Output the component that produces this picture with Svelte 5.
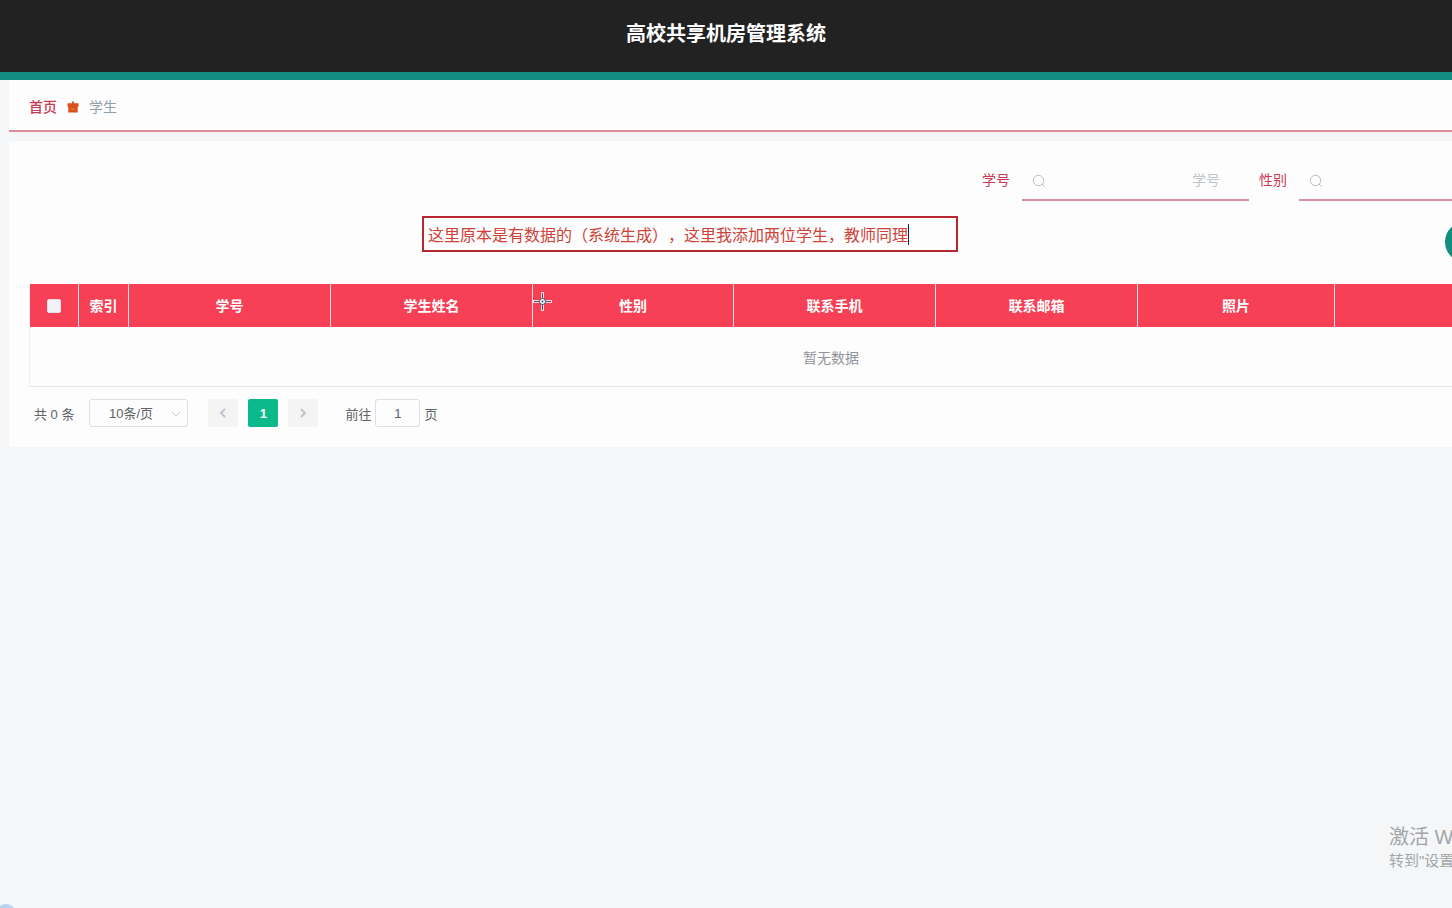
<script lang="ts">
  const columns = [
    { label: '学号', width: 202 },
    { label: '学生姓名', width: 202 },
    { label: '性别', width: 201 },
    { label: '联系手机', width: 202 },
    { label: '联系邮箱', width: 202 },
    { label: '照片', width: 197 }
  ];

  let studentNo = $state('');
  let gender = $state('');
  let allChecked = $state(false);
  let pageSize = $state(10);
  let jumpPage = $state('1');
</script>

<div class="app">
  <header class="header">
    <h1>高校共享机房管理系统</h1>
  </header>

  <div class="content">
    <nav class="breadcrumb">
      <a href="#home">首页</a>
      <svg width="12" height="12" viewBox="0 0 12 12" aria-hidden="true">
        <path d="M5 0.5h2v1.8h4.5v3.4h-0.8V11.5h-9.4V5.7h-0.8V2.3h4.5z" fill="#d9501e" />
        <path d="M4 7.8q2 1.2 4 0" fill="none" stroke="#ee8a3a" />
      </svg>
      <span>学生</span>
    </nav>

    <main class="panel">
      <form class="search">
        <div class="field">
          <label for="student-no">学号</label>
          <div class="input-wrap">
            {@render searchIcon()}
            <input id="student-no" type="text" placeholder="学号" bind:value={studentNo} />
          </div>
        </div>
        <div class="field">
          <label for="gender">性别</label>
          <div class="input-wrap">
            {@render searchIcon()}
            <input id="gender" type="text" placeholder="性别" bind:value={gender} />
          </div>
        </div>
      </form>

      <div class="actions">
        <button class="btn-add" type="button" aria-label="新增"></button>
      </div>

      <table>
        <colgroup>
          <col style="width: 49px" />
          <col style="width: 50px" />
          {#each columns as column}
            <col style="width: {column.width}px" />
          {/each}
          <col />
        </colgroup>
        <thead>
          <tr>
            <th><input type="checkbox" aria-label="全选" bind:checked={allChecked} /></th>
            <th>索引</th>
            {#each columns as column}
              <th>{column.label}</th>
            {/each}
            <th></th>
          </tr>
        </thead>
        <tbody>
          <tr>
            <td colspan={columns.length + 3}>暂无数据</td>
          </tr>
        </tbody>
      </table>

      <div class="pagination">
        <span class="total">共 0 条</span>
        <div class="size">
          <select aria-label="每页条数" bind:value={pageSize}>
            <option value={10}>10条/页</option>
            <option value={20}>20条/页</option>
          </select>
          <svg width="10" height="6" viewBox="0 0 10 6" aria-hidden="true">
            <path d="M1 1l4 4 4-4" fill="none" stroke="#c0c4cc" />
          </svg>
        </div>
        <div class="pager">
          <button type="button" disabled aria-label="上一页">
            <svg width="8" height="10" viewBox="0 0 8 10"><path d="M6 1L2 5l4 4" /></svg>
          </button>
          <button type="button" class="active">1</button>
          <button type="button" disabled aria-label="下一页">
            <svg width="8" height="10" viewBox="0 0 8 10"><path d="M2 1l4 4-4 4" /></svg>
          </button>
        </div>
        <label class="jump">
          前往
          <input type="text" bind:value={jumpPage} />
          页
        </label>
      </div>
    </main>
  </div>

  <div class="note">这里原本是有数据的（系统生成），这里我添加两位学生，教师同理<i class="caret"></i></div>

  <svg class="cursor" width="19" height="19" viewBox="0 0 19 19" aria-hidden="true">
    <path d="M9.5 0v7M9.5 12v7M0 9.5h7M12 9.5h7" stroke="#fbd5dc" stroke-width="3" />
    <path d="M9.5 1v6M9.5 12v6M1 9.5h6M12 9.5h6" stroke="#5b5560" />
    <circle cx="9.5" cy="9.5" r="3" fill="#fff" stroke="#2f4f6a" />
    <circle cx="9.5" cy="9.5" r="1" fill="#2f4f6a" />
  </svg>

  <div class="watermark">
    <div class="watermark-title">激活 Windows</div>
    <div>转到"设置"以激活 Windows。</div>
  </div>

  <div class="orb"></div>
</div>

{#snippet searchIcon()}
  <svg class="search-icon" width="14" height="14" viewBox="0 0 14 14" aria-hidden="true">
    <circle cx="6.5" cy="6.5" r="5.2" fill="none" stroke="#b9bcc3" />
    <path d="M10.2 10.2l2.4 2.4" stroke="#b9bcc3" />
  </svg>
{/snippet}

<style>
  :global(body) {
    margin: 0;
    background: #f5f6f8;
  }

  .app {
    position: relative;
    min-height: 100vh;
    overflow: hidden;
    font-family: 'Liberation Sans', 'Noto Sans CJK SC', sans-serif;
    font-size: 14px;
    color: #606266;
  }

  input,
  select,
  button {
    box-sizing: border-box;
    margin: 0;
    font: inherit;
    color: inherit;
  }

  .header {
    height: 72px;
    border-bottom: 8px solid #128d80;
    background: #222;
    text-align: center;
  }

  h1 {
    margin: 0;
    font-size: 20px;
    line-height: 68px;
    color: #fff;
  }

  /* the page is wider than the window and runs off its right edge */
  .content {
    margin: 0 -200px 0 9px;
  }

  .breadcrumb {
    display: flex;
    align-items: center;
    gap: 10px;
    height: 50px;
    padding: 0 20px;
    border-bottom: 2px solid #dc8d9b;
    background: #fdfdfd;
    line-height: 20px;
    color: #8c9fae;
  }

  .breadcrumb a {
    font-weight: 500;
    color: #c93a52;
    text-decoration: none;
  }

  .breadcrumb a,
  .breadcrumb span {
    padding-top: 3px;
  }

  .breadcrumb svg {
    margin-top: 3px;
  }

  .panel {
    margin-top: 9px;
    padding: 20px;
    background: #fdfdfd;
  }

  .search {
    display: flex;
    justify-content: flex-end;
    gap: 10px;
    padding-right: 106px;
  }

  .field {
    display: flex;
    gap: 12px;
    line-height: 38px;
  }

  .field label {
    color: #c93a52;
  }

  .input-wrap {
    position: relative;
    width: 227px;
  }

  .search-icon {
    position: absolute;
    top: 13px;
    left: 10px;
  }

  .input-wrap input {
    display: block;
    width: 100%;
    height: 40px;
    padding: 0 29px;
    border: 0;
    border-bottom: 2px solid #dc8d9b;
    background: none;
    text-align: right;
    outline: none;
  }

  .input-wrap input::placeholder {
    color: #c0c4cc;
  }

  .actions {
    display: flex;
    justify-content: flex-end;
    margin: 21px 0 22px;
  }

  .btn-add {
    width: 187px;
    height: 40px;
    border: 0;
    border-radius: 20px;
    background: #128d80;
  }

  table {
    width: 100%;
    border-collapse: separate;
    border-spacing: 0;
    border-left: 1px solid #ebeef5;
    table-layout: fixed;
  }

  th {
    box-sizing: border-box;
    height: 43px;
    padding: 0;
    border-right: 1px solid #f6dfe5;
    background: #f73f55;
    color: #fff;
    line-height: 22px;
  }

  th input {
    display: block;
    width: 14px;
    height: 14px;
    margin: 0 auto;
    border: 1px solid #e4dfe8;
    border-radius: 2px;
    background: #f1f1f8;
    appearance: none;
  }

  td {
    box-sizing: border-box;
    height: 60px;
    padding: 0;
    border-bottom: 1px solid #e4e7ed;
    text-align: center;
    color: #909399;
  }

  .pagination {
    display: flex;
    align-items: center;
    height: 28px;
    margin-top: 12px;
    padding-left: 5px;
    font-size: 13px;
  }

  .size {
    position: relative;
    margin: 0 20px 0 15px;
  }

  .size select {
    display: block;
    width: 99px;
    height: 28px;
    padding: 0 16px 0 0;
    border: 1px solid #dcdfe6;
    border-radius: 3px;
    background: #fdfdfd;
    text-align: center;
    text-align-last: center;
    appearance: none;
  }

  .size svg {
    position: absolute;
    top: 12px;
    right: 7px;
  }

  .pager {
    display: flex;
    gap: 10px;
  }

  .pager button {
    display: flex;
    align-items: center;
    justify-content: center;
    width: 30px;
    height: 28px;
    padding: 0;
    border: 0;
    border-radius: 2px;
    background: #f4f4f5;
  }

  .pager button.active {
    background: #0bb98b;
    font-weight: 700;
    color: #fff;
  }

  .pager path {
    fill: none;
    stroke: #c0c4cc;
    stroke-width: 2;
  }

  .jump {
    display: flex;
    align-items: center;
    gap: 4px;
    margin-left: 27px;
  }

  .jump input {
    width: 45px;
    height: 28px;
    padding: 0;
    border: 1px solid #dcdfe6;
    border-radius: 3px;
    background: #fdfdfd;
    text-align: center;
  }

  .note {
    position: absolute;
    top: 216px;
    left: 422px;
    display: flex;
    align-items: center;
    box-sizing: border-box;
    width: 536px;
    height: 36px;
    padding-left: 4px;
    border: 2px solid #b8262f;
    font-size: 16px;
    color: #cf4238;
    white-space: nowrap;
    text-spacing-trim: space-all;
  }

  .caret {
    width: 1px;
    height: 21px;
    background: #222;
  }

  .cursor {
    position: absolute;
    top: 292px;
    left: 533px;
  }

  .watermark {
    position: absolute;
    right: -140px;
    bottom: 36px;
    width: 203px;
    font-size: 15px;
    line-height: 22px;
    color: #a3a5a8;
    white-space: nowrap;
  }

  .watermark-title {
    font-size: 20px;
    line-height: 26px;
  }

  .orb {
    position: absolute;
    bottom: -16px;
    left: -4px;
    width: 20px;
    height: 20px;
    border-radius: 50%;
    background: #b5d5f0;
  }
</style>
